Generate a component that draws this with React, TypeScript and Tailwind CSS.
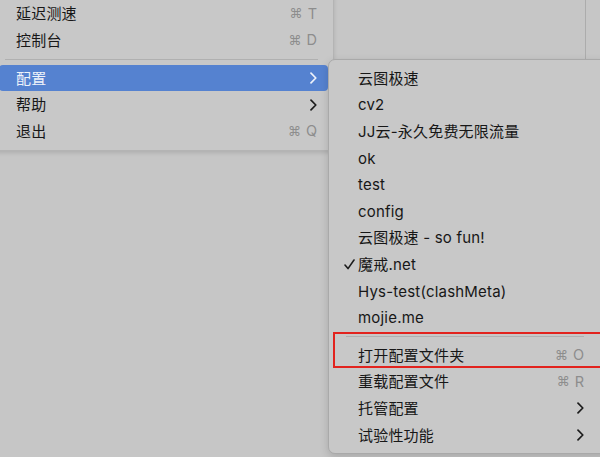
import React from 'react';

type Item =
  | { kind: 'item'; label: string; shortcut?: string; submenu?: boolean; active?: boolean; checked?: boolean }
  | { kind: 'sep' };

const mainItems: Item[] = [
  { kind: 'item', label: '延迟测速', shortcut: 'T' },
  { kind: 'item', label: '控制台', shortcut: 'D' },
  { kind: 'sep' },
  { kind: 'item', label: '配置', submenu: true, active: true },
  { kind: 'item', label: '帮助', submenu: true },
  { kind: 'item', label: '退出', shortcut: 'Q' },
];

const subItems: Item[] = [
  { kind: 'item', label: '云图极速' },
  { kind: 'item', label: 'cv2' },
  { kind: 'item', label: 'JJ云-永久免费无限流量' },
  { kind: 'item', label: 'ok' },
  { kind: 'item', label: 'test' },
  { kind: 'item', label: 'config' },
  { kind: 'item', label: '云图极速 - so fun!' },
  { kind: 'item', label: '魔戒.net', checked: true },
  { kind: 'item', label: 'Hys-test(clashMeta)' },
  { kind: 'item', label: 'mojie.me' },
  { kind: 'sep' },
  { kind: 'item', label: '打开配置文件夹', shortcut: 'O' },
  { kind: 'item', label: '重载配置文件', shortcut: 'R' },
  { kind: 'item', label: '托管配置', submenu: true },
  { kind: 'item', label: '试验性功能', submenu: true },
];

const Chevron = ({ light }: { light?: boolean }) => (
  <svg width="7" height="12" viewBox="0 0 7 12" className="shrink-0">
    <path d="M1 1.2 L5.8 6 L1 10.8" fill="none" stroke={light ? '#eef2fa' : '#1c1c1c'} strokeWidth="1.7" strokeLinecap="round" strokeLinejoin="round" />
  </svg>
);

const Row = ({ item, padLeft }: { item: Extract<Item, { kind: 'item' }>; padLeft: string }) => (
  <div
    className={`relative mx-[5px] flex h-[26.6px] items-center justify-between rounded-[4px] pr-[11px] ${padLeft} ${
      item.active ? 'bg-[#5582d0] text-[#eef2fa]' : 'text-[#171717]'
    }`}
  >
    {item.checked && (
      <svg width="11" height="11" viewBox="0 0 11 11" className="absolute left-[10px] top-[8px]">
        <path d="M1 6 L4 9.6 L10 1" fill="none" stroke="#1c1c1c" strokeWidth="1.6" strokeLinecap="round" strokeLinejoin="round" />
      </svg>
    )}
    <span className="text-[15px] leading-none tracking-[0.2px]">{item.label}</span>
    {item.shortcut && (
      <span className="flex items-center gap-[5px] text-[14.5px] leading-none text-[#8d8d8d]">
        <span className="text-[13px]">⌘</span>
        <span>{item.shortcut}</span>
      </span>
    )}
    {item.submenu && <Chevron light={item.active} />}
  </div>
);

const Separator = ({ inset }: { inset: string }) => (
  <div className="flex h-[11px] items-center">
    <div className={`h-px w-full bg-[#b0b0b0] ${inset}`} />
  </div>
);

export default function App() {
  return (
    <div
      className="relative h-[457px] w-[600px] overflow-hidden bg-[#c6c6c6]"
      style={{ fontFamily: 'Inter, "Noto Sans CJK SC", sans-serif' }}
    >
      {/* window edge behind the menus */}
      <div className="absolute left-[585px] top-0 h-[60px] w-px bg-[#acacac]" />

      {/* main menu */}
      <div className="absolute left-[-6px] top-[-8px] w-[340px] border-r border-b border-[#b4b4b4] bg-[#c8c8c8] pt-[8.7px] pb-[5px] shadow-[0_2px_4px_rgba(0,0,0,0.12)]">
        {mainItems.map((it, i) =>
          it.kind === 'sep' ? (
            <Separator key={i} inset="ml-[11px] mr-[15px]" />
          ) : (
            <Row key={i} item={it} padLeft="pl-[17px]" />
          )
        )}
      </div>

      {/* submenu */}
      <div className="absolute left-[328px] top-[59px] w-[282px] rounded-[7px] border border-[#a9a9a9] bg-[#c8c8c8] pt-[5px] pb-[5px] shadow-[0_3px_8px_rgba(0,0,0,0.15)]">
        {subItems.map((it, i) =>
          it.kind === 'sep' ? (
            <Separator key={i} inset="ml-[17px] mr-[25px]" />
          ) : (
            <div key={i} className="[&>div]:pr-[20px]">
              <Row item={it} padLeft="pl-[24px]" />
            </div>
          )
        )}
      </div>

      {/* highlight box */}
      <div className="absolute left-[333px] top-[332px] h-[36px] w-[280px] border-2 border-[#e2231e]" />
    </div>
  );
}
